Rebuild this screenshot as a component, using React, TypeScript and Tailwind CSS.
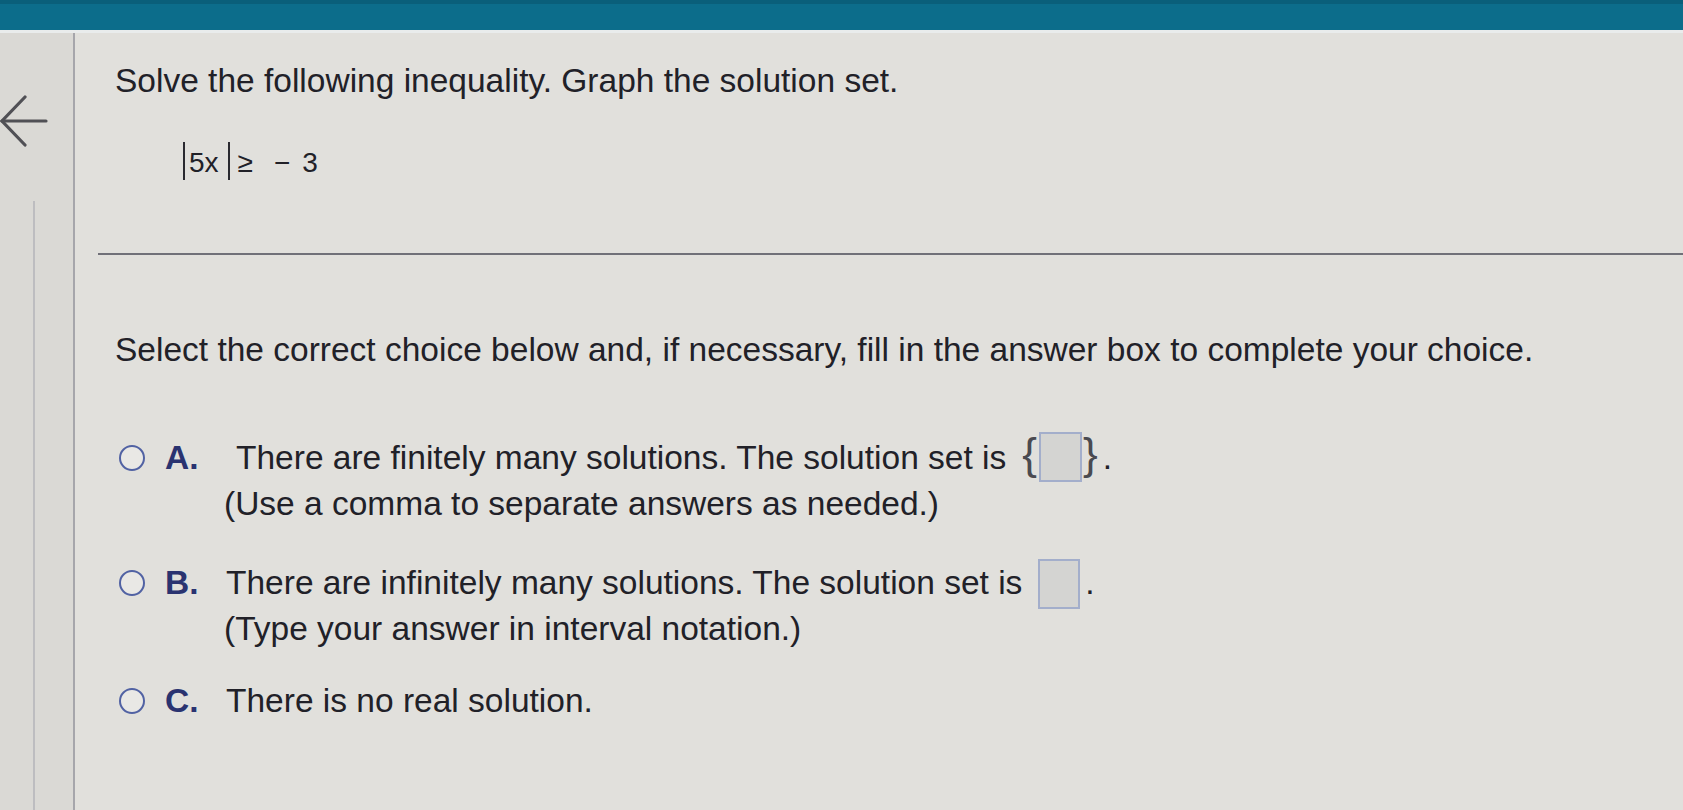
import type { FC, ReactNode } from "react";

const Radio = () => (
  <div className="mt-[10px] h-[26px] w-[26px] shrink-0 rounded-full border-[2.5px] border-[#5162a3] bg-[#e9e8e5]" />
);

interface ChoiceProps {
  label: string;
  children: ReactNode;
  className?: string;
}

const Choice: FC<ChoiceProps> = ({ label, children, className }) => (
  <div className={`flex items-start ${className ?? ""}`}>
    <div className="ml-[44px]">
      <Radio />
    </div>
    <div className="ml-[20px] w-[59px] shrink-0 font-bold text-[#2a3370]">{label}</div>
    <div className="flex flex-col">{children}</div>
  </div>
);

const AnswerBox = ({ sink }: { sink: "a" | "b" }) => (
  <span
    className={
      sink === "a"
        ? "inline-block h-[50px] w-[43px] -mt-[3px] -mb-[13px] align-baseline border-2 border-[#a3aecb] bg-[#d4d4d2]"
        : "inline-block h-[50px] w-[42px] -mt-[1px] -mb-[15px] align-baseline border-2 border-[#a3aecb] bg-[#d4d4d2]"
    }
  />
);

export default function App() {
  return (
    <div
      className="flex h-[810px] w-full flex-col overflow-hidden bg-[#e1e0dc] text-[#212128]"
      style={{ fontFamily: '"Liberation Sans", Arial, sans-serif' }}
    >
      <div className="h-[30px] shrink-0 border-t-4 border-[#0a5f7a] bg-[#0c6d8b]" />
      <div className="h-[3px] shrink-0 bg-[#e9ecec]" />

      <div className="flex flex-1">
        {/* left rail */}
        <div className="flex w-[75px] shrink-0 flex-col border-r-2 border-[#a6a6ab] bg-[#dad9d5]">
          <svg
            className="mt-[61px]"
            width="48"
            height="54"
            viewBox="0 0 48 54"
            fill="none"
            stroke="#505055"
            strokeWidth="3.2"
            strokeLinecap="round"
          >
            <path d="M46 27H2" />
            <path d="M25 3L2 27L25 51" />
          </svg>
          <div className="mt-[53px] ml-[33px] flex-1 border-l-2 border-[#bdbdc0]" />
        </div>

        {/* content */}
        <div className="flex flex-1 flex-col text-[33.5px]">
          <div className="mt-[28px] pl-[40px] leading-[40px]">
            Solve the following inequality. Graph the solution set.
          </div>

          <div className="mt-[42px] ml-[108px] flex h-[40px] items-start text-[28px] leading-[40px]">
            <span className="-mt-[1px] h-[38px] w-[2px] bg-[#2a2a30]" />
            <span className="ml-[4px]">5x</span>
            <span className="-mt-[1px] ml-[9px] h-[38px] w-[2px] bg-[#2a2a30]" />
            <span className="ml-[8px]">≥</span>
            <span className="ml-[21px]">−</span>
            <span className="ml-[12px]">3</span>
          </div>

          <div className="mt-[70px] ml-[23px] h-[2px] bg-[#707078]" />

          <div className="mt-[75px] pl-[40px] leading-[40px]">
            Select the correct choice below and, if necessary, fill in the answer box to complete your choice.
          </div>

          <div className="flex flex-col leading-[46px]">
            <Choice label="A." className="mt-[65px]">
              <div className="pl-[12px]">
                There are finitely many solutions. The solution set is
                <span className="ml-[16px] text-[44px] leading-[20px] text-[#4a4a50]">{"{"}</span>
                <span className="ml-[2px]">
                  <AnswerBox sink="a" />
                </span>
                <span className="ml-[1px] text-[44px] leading-[20px] text-[#4a4a50]">{"}"}</span>
                <span className="ml-[5px]">.</span>
              </div>
              <div>(Use a comma to separate answers as needed.)</div>
            </Choice>

            <Choice label="B." className="mt-[33px]">
              <div className="pl-[2px]">
                There are infinitely many solutions. The solution set is
                <span className="ml-[16px]">
                  <AnswerBox sink="b" />
                </span>
                <span className="ml-[5px]">.</span>
              </div>
              <div>(Type your answer in interval notation.)</div>
            </Choice>

            <Choice label="C." className="mt-[26px]">
              <div className="pl-[2px]">There is no real solution.</div>
            </Choice>
          </div>
        </div>
      </div>
    </div>
  );
}
